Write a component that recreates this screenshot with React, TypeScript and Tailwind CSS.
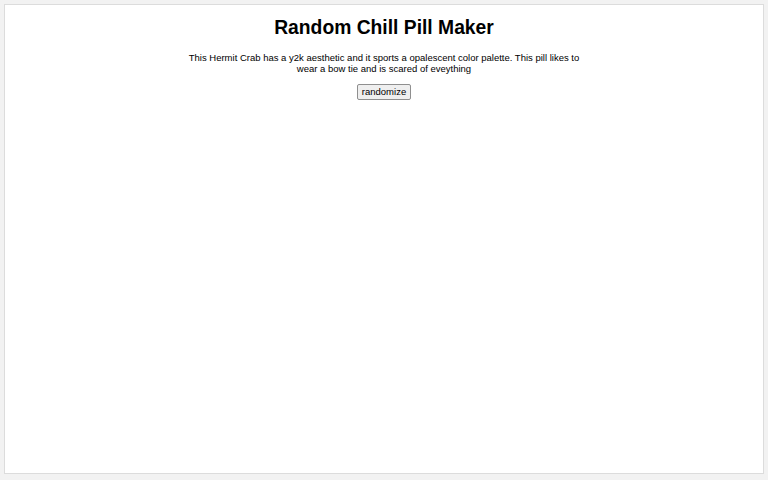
export default function App() {
  return (
    <div className="min-h-screen bg-[#f2f2f2] p-1 font-['Liberation_Sans',Arial,sans-serif]">
      <div className="h-[470px] border border-[#dcdcdc] bg-white">
        <div className="mx-auto flex max-w-[398px] flex-col items-center pt-[11px] text-center text-black">
          <h1 className="text-[19.3px] font-bold leading-[24px]">Random Chill Pill Maker</h1>
          <p className="mt-[12px] text-[9.5px] leading-[11px]">
            This Hermit Crab has a y2k aesthetic and it sports a opalescent color palette. This pill likes to
            wear a bow tie and is scared of eveything
          </p>
          <button className="mt-[10px] rounded-[2px] border border-[#8f8f8f] bg-[#efefef] px-[4px] py-[1px] text-[9.5px] leading-[12px]">
            randomize
          </button>
        </div>
      </div>
    </div>
  );
}
